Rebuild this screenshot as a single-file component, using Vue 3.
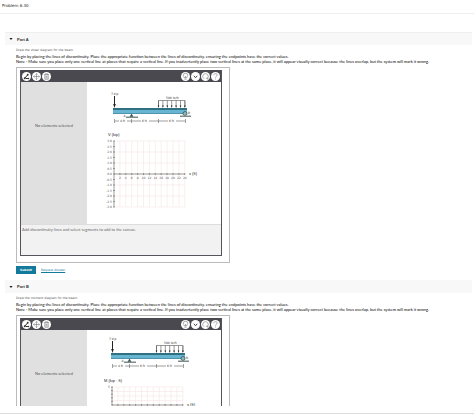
<script setup>
const note1 = 'Begin by placing the lines of discontinuity. Place the appropriate function between the lines of discontinuity, ensuring the endpoints have the correct values.'
const note2 = 'Note - Make sure you place only one vertical line at places that require a vertical line. If you inadvertently place two vertical lines at the same place, it will appear visually correct because the lines overlap, but the system will mark it wrong.'

const parts = [
  {
    id: 'a', name: 'Part A', task: 'Draw the shear diagram for the beam.', open: true, height: 142,
    beam: 'translate(0 0)', left: 27, title: 'V (kip)', titleX: 21, titleY: 54,
    top: 59, zero: 92, bottom: 125, rowGap: 11, tickGap: 5.5,
    labels: ['3.0', '2.5', '2.0', '1.5', '1.0', '0.5', '0.0', '-0.5', '-1.0', '-1.5', '-2.0', '-2.5', '-3.0'],
    columns: 12,
  },
  {
    id: 'b', name: 'Part B', task: 'Draw the moment diagram for the beam.', open: false, height: 78,
    beam: 'translate(-2 -3)', left: 25, title: 'M (kip · ft)', titleX: 17, titleY: 52,
    top: 57, zero: 75, bottom: 75, rowGap: 4.5, tickGap: 3.6,
    labels: ['5'],
    columns: 0,
  },
]

const range = (from, to, step) => {
  const out = []
  for (let v = from; v <= to + 0.01; v += step) out.push(v)
  return out
}
const colGap = 5.9
const arrows = range(0, 6, 1).map((i) => 71.5 + i * 4.4)
const leftTools = ['Segment', 'Add', 'Delete']
const rightTools = ['Hint', 'Collapse', 'Reset', 'Help']
</script>

<template>
  <div class="page">
    <header class="top"><h1>Problem 6.30</h1></header>
    <main>
      <section v-for="p in parts" :key="p.id" class="part">
        <h2 class="bar">
          <button type="button" class="toggle" :aria-label="'Toggle ' + p.name">
            <svg viewBox="0 0 4 4"><path d="M.4 1h3.2L2 3z" /></svg>
          </button>
          {{ p.name }}
        </h2>
        <div class="body">
          <p class="task">{{ p.task }}</p>
          <p class="note">{{ note1 }}</p>
          <p class="note">{{ note2 }}</p>
          <div class="frame" :class="{ cut: !p.open }">
            <div class="tool">
              <div class="toolbar">
                <div class="group">
                  <button v-for="t in leftTools" :key="t" type="button" class="round" :aria-label="t">
                    <svg viewBox="0 0 18 18">
                      <template v-if="t === 'Segment'">
                        <path class="s" d="M6 12 11 6M8 13h5" />
                        <circle cx="5.500" cy="12.500" r="2" /><circle cx="11.500" cy="5.500" r="1.800" /><circle cx="13" cy="13" r="1.400" />
                      </template>
                      <path v-else-if="t === 'Add'" class="t" d="M9 3v12M3 9h12M7 5l2-2 2 2M7 13l2 2 2-2M5 7 3 9l2 2M13 7l2 2-2 2" />
                      <path v-else class="t" d="M4.500 5h9M7 5V3.500h4V5M5.500 5v9.500h7V5M8 7v6M10 7v6" />
                    </svg>
                  </button>
                </div>
                <div class="group">
                  <button v-for="t in rightTools" :key="t" type="button" class="round" :aria-label="t">
                    <svg viewBox="0 0 18 18">
                      <path v-if="t === 'Hint'" class="t" d="M7 12c0-2-2.500-2.500-2.500-5a4.500 4.500 0 0 1 9 0c0 2.500-2.500 3-2.500 5zM7 14.500h4M9 12V8" />
                      <path v-else-if="t === 'Collapse'" class="s" d="M5.500 8 9 11l3.500-3" />
                      <path v-else-if="t === 'Reset'" class="t" d="M6 13.500a5.500 5.500 0 1 1 6 0M12 10.500v3.500h3.500" />
                      <path v-else class="t" d="M5.500 6.500c0-4.500 7-4.500 7-.5 0 2.500-3.500 2.500-3.500 5M9 13v2" />
                    </svg>
                  </button>
                </div>
              </div>
              <div class="work">
                <aside class="side">No elements selected</aside>
                <svg class="canvas" width="134" :height="p.height" :viewBox="`0 0 134 ${p.height}`" role="img" :aria-label="p.title + ' diagram'">
                  <g :transform="p.beam">
                    <text x="24" y="13">7 kip</text>
                    <path class="ink" d="M27.500 14v10" />
                    <path class="head" d="M26.200 22h2.600l-1.300 4z" />
                    <text x="79" y="17">500 lb/ft</text>
                    <path class="load" d="M71.500 25v-6.500h26.400V25" />
                    <g v-for="x in arrows" :key="x">
                      <path class="load" :d="`M${x} 18.500v6`" />
                      <path class="head" :d="`M${x - 0.8} 23.500h1.600l-.8 2.500z`" />
                    </g>
                    <rect x="26" y="26" width="74" height="6" fill="#68b5d2" />
                    <rect x="26" y="26" width="74" height="2" fill="#316f83" />
                    <rect x="26" y="31" width="74" height="1" fill="#4f93ad" />
                    <path d="M42.500 35l2-3.500 2 3.500z" fill="#39555a" />
                    <rect x="39" y="34.500" width="12" height="1.500" fill="#7d8b8b" />
                    <circle cx="98" cy="31.500" r="2" fill="#8db8bd" stroke="#39555a" stroke-width=".8" />
                    <rect x="93" y="33.500" width="11" height="1.500" fill="#7d8b8b" />
                    <text x="36.500" y="35">A</text>
                    <text x="101" y="32">B</text>
                    <path class="dim" d="M27.500 37v4M44.500 37v4M71.500 37v4M98.500 37v4M28 39h4M40 39h14M62 39h19M89 39h9" />
                    <text x="33" y="40">4 ft</text>
                    <text x="55" y="40">6 ft</text>
                    <text x="82" y="40">6 ft</text>
                  </g>
                  <text class="title" :x="p.titleX" :y="p.titleY">{{ p.title }}</text>
                  <path v-for="x in range(p.left + colGap, p.left + 71, colGap)" :key="'c' + x" class="grid" :d="`M${x} ${p.top}V${p.bottom}`" />
                  <path v-for="y in range(p.top, p.bottom, p.rowGap)" :key="'r' + y" class="grid" :d="`M${p.left} ${y}h71`" />
                  <path class="axis" :d="`M${p.left} ${p.top}V${p.bottom}M${p.left} ${p.zero}h71`" />
                  <path v-for="x in range(p.left + colGap, p.left + 71, colGap)" :key="'x' + x" class="axis" :d="`M${x} ${p.zero - 1}v2`" />
                  <path v-for="y in range(p.top, p.bottom, p.tickGap)" :key="'y' + y" class="axis" :d="`M${p.left - 1} ${y}h2`" />
                  <text v-for="(l, i) in p.labels" :key="'l' + i" class="num" :x="p.left - 2" :y="p.top + 1 + i * p.tickGap">{{ l }}</text>
                  <text v-for="n in p.columns" :key="'n' + n" class="tick" :x="p.left + n * colGap" :y="p.zero + 5">{{ n * 2 }}</text>
                  <text class="title" :x="p.left + 75" :y="p.zero + 1">x (ft)</text>
                </svg>
              </div>
              <p v-if="p.open" class="hint">Add discontinuity lines and select segments to add to the canvas.</p>
            </div>
          </div>
          <div v-if="p.open" class="actions">
            <button type="button" class="submit">Submit</button>
            <a href="#answer">Request Answer</a>
          </div>
        </div>
      </section>
    </main>
    <footer><div class="line"></div></footer>
  </div>
</template>

<style>
body { background: #fff; }
</style>

<style scoped>
* { box-sizing: border-box; }
h1, h2, p { margin: 0; font-weight: 400; }
button { font-family: inherit; padding: 0; border: 0; }
svg { display: block; }
.page { display: flex; flex-direction: column; height: 100vh; overflow: hidden; font-family: "DejaVu Sans", sans-serif; font-size: 3px; line-height: 5px; color: #222; }
.top { flex: none; height: 14px; padding: 3px 2px; border-bottom: 1px solid #eee; }
h1 { font-size: 4px; line-height: 6px; color: #222; }
main { flex: 1; min-height: 0; overflow: hidden; padding: 18px 2px 0 5px; }
.bar { display: flex; align-items: center; gap: 4px; height: 13px; padding-left: 4px; background: #f8f8f8; font-family: "Liberation Sans", sans-serif; font-size: 4px; font-weight: 700; color: #333; }
.part:first-child .bar { border-top: 1px solid #eee; }
.toggle { width: 4px; height: 4px; background: none; }
.toggle svg { width: 4px; height: 4px; fill: #222; }
.body { padding: 3px 0 6px 11px; }
.task { color: #555; margin-bottom: 1px; }
.note { white-space: nowrap; color: #000; }
.note, .hint, .side { font-family: Lato, sans-serif; font-size: 4px; }
.frame { width: 214px; margin-top: 3px; padding: 2px 7px 6px 3px; border: 1px solid #bbb; }
.tool { border: 1px solid #55545a; background: #f2f2f2; }
.cut { padding-bottom: 0; border-bottom: 0; }
.cut .tool { border-bottom: 0; }
.toolbar { display: flex; justify-content: space-between; align-items: center; height: 12px; padding: 0 1px; margin: -1px 0 0; background: #4a4950; }
.group { display: flex; gap: 1px; }
.round { width: 9px; height: 9px; border-radius: 50%; background: #fff; }
.round svg { width: 9px; height: 9px; }
.round circle { fill: #333; }
.s, .t { fill: none; stroke: #333; stroke-width: 2; }
.t { stroke: #777; stroke-width: 1.2; }
.work { display: flex; background: #fff; }
.side { flex: 1; padding-top: 41px; text-align: center; background: #e0e0e0; color: #555; white-space: nowrap; }
.canvas { flex: none; fill: #333; }
.canvas text { font-size: 3px; }
.canvas .title { font-family: "Liberation Sans", sans-serif; font-size: 4px; fill: #222; }
.canvas .num { text-anchor: end; fill: #555; }
.canvas .tick { text-anchor: middle; fill: #555; }
.ink { stroke: #222; stroke-width: 1; }
.load { fill: none; stroke: #555; stroke-width: .6; }
.head { fill: #222; }
.dim { stroke: #777; stroke-width: .7; }
.grid { stroke: #f7e4e4; stroke-width: .6; }
.axis { stroke: #777; stroke-width: .7; }
.hint { height: 31px; padding: 2px 1px; border-top: 1px solid #ddd; color: #666; }
.actions { display: flex; align-items: center; gap: 5px; margin-top: 3px; }
.submit { width: 20px; height: 8px; background: #127a9a; color: #fff; font-size: 3px; font-weight: 700; line-height: 8px; }
a { color: #127a9a; }
footer { flex: none; height: 12px; padding-top: 7px; background: #fff; }
.line { height: 1px; background: #ddd; }
</style>
